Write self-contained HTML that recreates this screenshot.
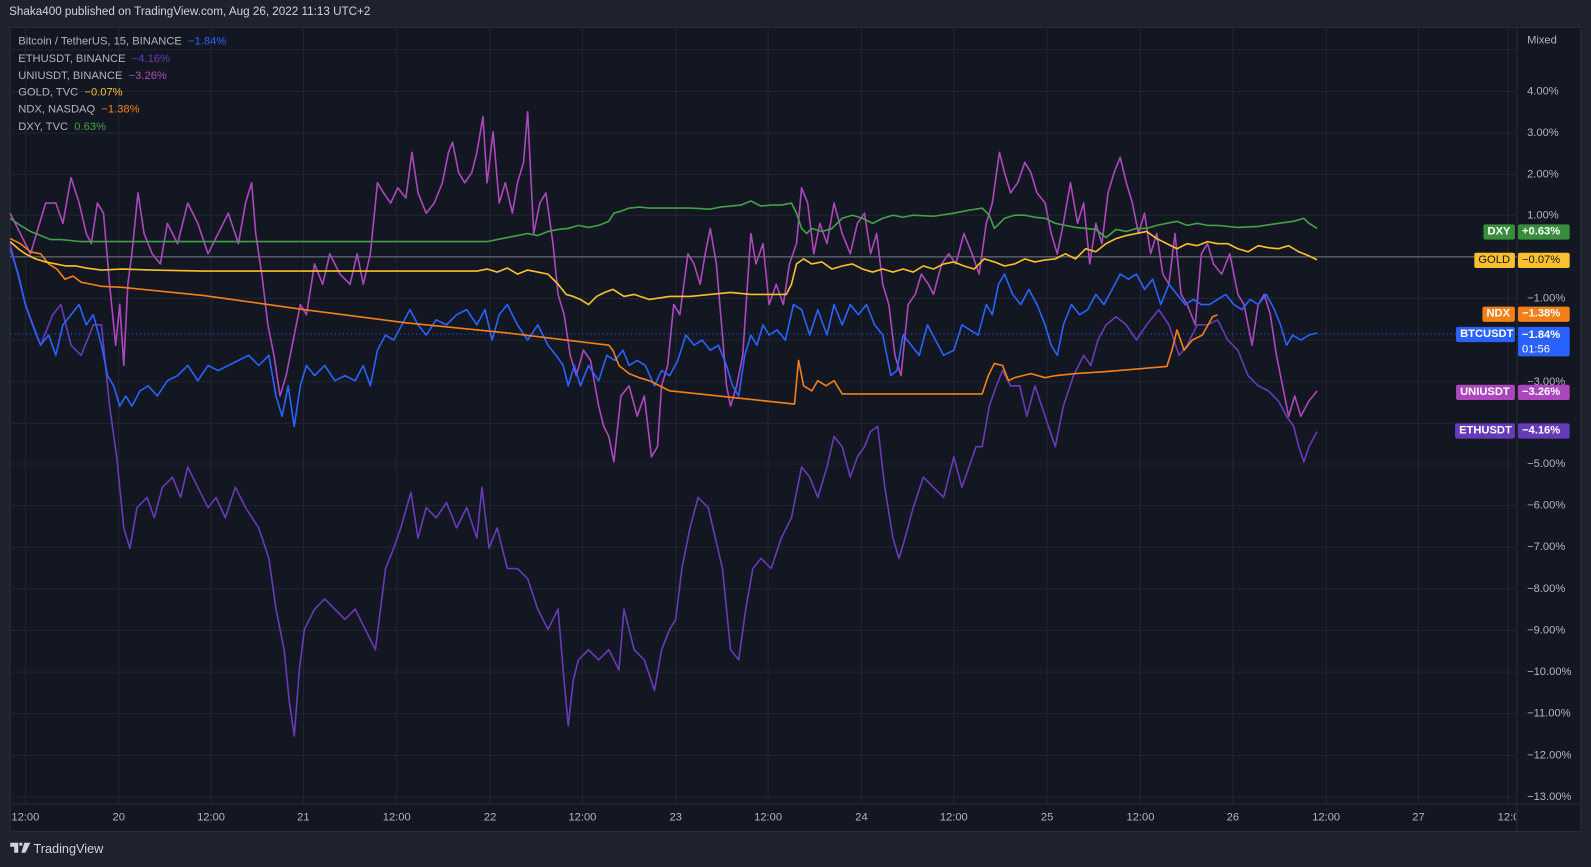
<!DOCTYPE html>
<html><head><meta charset="utf-8"><style>
html,body{margin:0;padding:0;background:#1e222d;overflow:hidden;width:1591px;height:867px}
#w{position:absolute;left:0;top:0;width:1568px;height:854px;transform:scale(1.01467,1.01522);transform-origin:0 0;font-family:"Liberation Sans",sans-serif}
.hd{position:absolute;left:9px;top:6px;font-size:11.5px;color:#d1d4dc}
.lg{position:absolute;left:18px;font-size:11px;color:#b2b5be;line-height:12px}
.ax{position:absolute;left:1505px;font-size:11px;color:#b2b5be}
.tx{position:absolute;top:799px;font-size:11px;color:#b2b5be;transform:translateX(-50%)}
.lb{position:absolute;height:15px;font-size:11px;font-weight:bold;color:#fff;line-height:15px;border-radius:2px;padding:0 4px;box-sizing:border-box}
</style></head><body><div id="w">
<div class="hd">Shaka400 published on TradingView.com, Aug 26, 2022 11:13 UTC+2</div>
<svg width="1568" height="854" style="position:absolute;left:0;top:0">
<rect x="10" y="27" width="1548" height="792" fill="#131722" stroke="#2a2e39"/>
<g stroke="#232632" stroke-width="1">
<line x1="25" y1="27" x2="25" y2="792"/><line x1="117" y1="27" x2="117" y2="792"/><line x1="208" y1="27" x2="208" y2="792"/><line x1="299" y1="27" x2="299" y2="792"/><line x1="391" y1="27" x2="391" y2="792"/><line x1="483" y1="27" x2="483" y2="792"/><line x1="574" y1="27" x2="574" y2="792"/><line x1="666" y1="27" x2="666" y2="792"/><line x1="757" y1="27" x2="757" y2="792"/><line x1="849" y1="27" x2="849" y2="792"/><line x1="940" y1="27" x2="940" y2="792"/><line x1="1032" y1="27" x2="1032" y2="792"/><line x1="1124" y1="27" x2="1124" y2="792"/><line x1="1215" y1="27" x2="1215" y2="792"/><line x1="1307" y1="27" x2="1307" y2="792"/><line x1="1398" y1="27" x2="1398" y2="792"/><line x1="1486" y1="27" x2="1486" y2="792"/>
<line x1="10" y1="49" x2="1495" y2="49"/><line x1="10" y1="90" x2="1495" y2="90"/><line x1="10" y1="131" x2="1495" y2="131"/><line x1="10" y1="172" x2="1495" y2="172"/><line x1="10" y1="212" x2="1495" y2="212"/><line x1="10" y1="294" x2="1495" y2="294"/><line x1="10" y1="335" x2="1495" y2="335"/><line x1="10" y1="376" x2="1495" y2="376"/><line x1="10" y1="417" x2="1495" y2="417"/><line x1="10" y1="457" x2="1495" y2="457"/><line x1="10" y1="498" x2="1495" y2="498"/><line x1="10" y1="539" x2="1495" y2="539"/><line x1="10" y1="580" x2="1495" y2="580"/><line x1="10" y1="621" x2="1495" y2="621"/><line x1="10" y1="662" x2="1495" y2="662"/><line x1="10" y1="703" x2="1495" y2="703"/><line x1="10" y1="744" x2="1495" y2="744"/><line x1="10" y1="785" x2="1495" y2="785"/>
</g>
<line x1="1495" y1="27" x2="1495" y2="819" stroke="#2a2e39"/>
<line x1="10" y1="792" x2="1558" y2="792" stroke="#2a2e39"/>
<line x1="10" y1="253" x2="1495" y2="253" stroke="#787b86"/>
<line x1="10" y1="329" x2="1495" y2="329" stroke="#2962ff" stroke-dasharray="1 3"/>
<g fill="none" stroke-width="1.6" stroke-linejoin="round">
<polyline stroke="#673ab7" points="10,240 25,300 40,340 52,310 60,300 70,340 80,350 92,320 100,320 108,400 115,450 122,520 128,540 135,500 145,490 152,510 160,480 170,470 178,490 185,460 195,480 205,500 213,490 222,510 232,480 242,500 255,520 265,550 272,600 280,640 285,690 290,725 295,660 300,620 310,600 320,590 330,600 340,610 350,600 360,620 370,640 380,560 388,540 395,520 405,485 412,530 420,500 430,510 440,495 450,520 460,500 470,530 475,480 482,540 490,520 500,560 510,560 520,570 530,600 540,620 550,600 555,660 560,715 565,670 570,650 580,640 590,650 600,640 610,660 615,600 625,640 635,650 645,680 652,640 660,620 666,610 672,560 680,520 688,490 698,500 705,530 712,560 720,640 728,650 735,600 742,560 750,550 760,560 770,530 780,510 790,460 798,470 806,490 815,460 822,430 830,440 838,470 845,450 852,440 858,425 865,420 872,480 880,530 886,550 892,530 900,500 910,470 920,480 930,490 940,450 948,480 955,460 962,440 968,440 975,400 982,380 988,365 996,380 1005,380 1012,410 1020,380 1030,410 1040,440 1048,400 1058,370 1068,350 1075,360 1082,335 1090,320 1100,312 1110,320 1120,335 1130,320 1142,305 1152,320 1162,350 1170,340 1180,320 1190,320 1200,315 1210,335 1220,345 1230,370 1240,380 1250,385 1260,395 1268,410 1275,420 1280,440 1285,455 1290,440 1298,425"/>
<polyline stroke="#ab47bc" points="10,210 20,230 30,250 45,200 55,200 62,220 70,175 78,200 85,230 90,240 96,200 102,210 108,280 114,340 118,300 122,360 126,280 130,250 136,190 142,230 150,250 158,260 165,220 175,240 185,200 195,220 205,250 215,230 225,210 235,240 242,200 248,180 252,230 258,270 264,320 270,350 276,390 282,370 290,330 296,300 302,310 310,260 318,280 325,250 335,270 345,280 352,250 358,280 365,250 372,180 378,190 385,200 392,185 400,195 406,150 412,190 420,210 428,200 436,180 442,150 446,140 452,170 458,180 465,170 470,150 476,115 480,180 486,130 492,200 498,180 505,210 510,180 516,160 520,110 526,230 532,200 538,190 545,240 550,290 556,310 562,350 568,370 575,345 582,355 590,400 595,420 600,430 605,455 612,390 620,380 628,410 635,390 642,450 648,440 652,380 658,360 664,300 670,310 678,250 684,260 690,280 695,250 700,225 706,260 712,330 716,380 720,400 726,380 732,350 740,230 745,260 752,240 758,300 765,280 772,300 778,260 785,240 790,185 796,200 802,250 808,220 815,240 822,200 830,230 838,250 845,220 852,210 858,250 864,230 870,280 876,300 882,350 888,370 895,300 902,290 908,270 915,280 920,290 928,260 935,250 942,260 950,230 958,250 965,270 972,220 978,200 985,150 990,170 996,190 1003,180 1010,160 1016,170 1022,190 1030,200 1036,230 1042,250 1048,220 1055,180 1062,220 1068,200 1074,260 1080,220 1086,240 1092,190 1098,170 1104,155 1110,180 1116,200 1122,230 1128,210 1134,250 1140,230 1146,270 1152,280 1158,230 1164,290 1170,300 1178,320 1184,250 1190,240 1196,260 1204,270 1212,250 1220,290 1226,300 1234,340 1240,300 1246,290 1252,310 1258,350 1264,380 1270,410 1276,390 1282,410 1290,395 1298,385"/>
<polyline stroke="#2962ff" points="10,245 18,270 25,300 32,320 40,340 48,330 55,350 62,320 70,310 78,300 85,320 92,310 100,340 106,370 112,380 118,400 124,390 130,400 138,385 146,380 155,390 165,375 175,370 185,360 195,375 205,360 215,365 225,360 235,355 245,350 255,360 265,350 272,390 278,410 284,380 290,420 296,380 302,360 310,370 320,360 330,375 340,370 350,375 358,360 365,380 372,345 380,330 388,335 396,320 404,305 412,320 420,330 430,315 440,320 450,310 460,305 470,320 478,305 485,335 492,310 500,300 510,320 520,335 530,320 540,340 548,350 555,360 560,380 566,360 572,380 580,360 590,375 598,350 606,355 614,345 620,360 628,355 636,360 645,380 652,365 660,370 668,355 676,330 684,340 692,335 700,345 708,340 716,360 722,380 728,390 734,350 740,330 746,340 752,320 758,330 766,325 774,335 782,300 790,305 798,330 806,305 815,330 822,300 830,320 838,300 846,310 854,300 862,320 870,330 878,370 884,365 890,330 898,340 906,350 914,320 922,335 930,350 940,345 948,320 956,325 964,330 972,300 978,310 984,280 990,270 998,290 1006,300 1014,285 1022,300 1030,320 1036,340 1042,350 1048,320 1056,300 1064,310 1072,305 1080,290 1088,300 1096,285 1104,270 1112,275 1120,270 1128,285 1136,275 1144,300 1152,280 1160,290 1168,300 1176,295 1184,300 1192,300 1200,295 1208,290 1216,300 1224,305 1232,295 1240,300 1248,290 1256,305 1262,320 1268,340 1274,330 1282,335 1290,330 1298,328"/>
<polyline stroke="#f57f17" points="10,235 20,240 30,248 40,250 48,260 56,265 64,275 72,272 80,278 90,280 100,282 120,283 200,291 300,305 400,318 500,328 600,340 604,345 610,360 620,368 630,372 640,375 650,380 660,385 783,398 787,355 792,380 800,385 806,375 814,380 822,375 830,388 840,388 968,388 974,370 980,358 988,360 994,375 1000,372 1008,370 1016,368 1030,372 1040,370 1060,368 1090,366 1150,361 1155,345 1160,325 1167,345 1175,335 1185,330 1195,312 1200,310"/>
<polyline stroke="#fbc02d" points="10,238 18,245 25,250 35,255 45,258 55,260 65,262 75,262 85,264 100,266 120,265 150,266 200,267 300,267 400,267 470,267 480,265 490,268 500,264 510,270 520,266 530,268 540,270 550,280 558,290 565,292 572,295 580,300 588,292 596,288 604,285 615,292 625,290 640,295 660,292 680,292 700,290 720,288 740,290 760,290 775,290 780,280 785,260 792,255 800,260 810,258 820,265 830,262 840,260 850,265 860,268 870,265 880,268 890,265 900,268 910,262 920,265 930,260 940,258 950,262 960,265 970,255 980,258 990,262 1000,260 1010,255 1020,258 1030,256 1040,255 1050,250 1060,255 1070,245 1080,248 1090,240 1100,235 1110,232 1120,230 1130,228 1140,235 1150,240 1160,245 1170,240 1180,242 1190,238 1200,240 1210,240 1220,245 1230,248 1240,242 1250,244 1260,245 1270,242 1280,248 1290,252 1298,256"/>
<polyline stroke="#43a047" points="10,215 20,222 30,228 40,232 50,236 60,236 80,238 100,238 200,238 300,238 400,238 480,238 490,236 500,234 510,232 520,230 530,232 540,228 550,226 560,225 570,222 580,224 590,222 600,218 605,210 612,208 620,205 630,204 640,205 660,205 680,205 700,206 710,204 720,203 730,202 740,198 750,203 760,202 770,202 780,200 785,210 790,225 795,230 800,225 810,228 820,225 830,215 840,212 850,215 860,220 870,215 880,212 890,214 900,212 920,213 940,210 955,207 968,205 975,212 980,225 990,215 1000,212 1010,212 1020,214 1030,215 1040,220 1050,222 1060,224 1070,225 1080,226 1090,234 1100,226 1110,228 1120,225 1130,225 1140,222 1150,220 1160,218 1170,222 1180,220 1190,222 1200,222 1220,224 1240,223 1260,220 1275,218 1285,215 1290,220 1298,225"/>
</g>
</svg>
<div class="lg" style="top:35px">Bitcoin / TetherUS, 15, BINANCE &nbsp;<span style="color:#2962ff">−1.84%</span></div>
<div class="lg" style="top:52px">ETHUSDT, BINANCE &nbsp;<span style="color:#673ab7">−4.16%</span></div>
<div class="lg" style="top:69px">UNIUSDT, BINANCE &nbsp;<span style="color:#ab47bc">−3.26%</span></div>
<div class="lg" style="top:85px">GOLD, TVC &nbsp;<span style="color:#fbc02d">−0.07%</span></div>
<div class="lg" style="top:102px">NDX, NASDAQ &nbsp;<span style="color:#f57f17">−1.38%</span></div>
<div class="lg" style="top:119px">DXY, TVC &nbsp;<span style="color:#43a047">0.63%</span></div>
<div class="ax" style="top:34px">Mixed</div>
<div class="ax" style="top:84px">4.00%</div><div class="ax" style="top:125px">3.00%</div><div class="ax" style="top:166px">2.00%</div><div class="ax" style="top:206px">1.00%</div><div class="ax" style="top:288px">−1.00%</div><div class="ax" style="top:370px">−3.00%</div><div class="ax" style="top:451px">−5.00%</div><div class="ax" style="top:492px">−6.00%</div><div class="ax" style="top:533px">−7.00%</div><div class="ax" style="top:574px">−8.00%</div><div class="ax" style="top:615px">−9.00%</div><div class="ax" style="top:656px">−10.00%</div><div class="ax" style="top:697px">−11.00%</div><div class="ax" style="top:738px">−12.00%</div><div class="ax" style="top:779px">−13.00%</div>
<div class="lb" style="left:1462px;top:221px;width:31px;background:#388e3c">DXY</div><div class="lb" style="left:1496px;top:221px;width:51px;background:#388e3c">+0.63%</div>
<div class="lb" style="left:1453px;top:249px;width:40px;background:#fbc02d;color:#131722;font-weight:normal">GOLD</div><div class="lb" style="left:1496px;top:249px;width:51px;background:#fbc02d;color:#131722;font-weight:normal">−0.07%</div>
<div class="lb" style="left:1461px;top:302px;width:32px;background:#f57f17">NDX</div><div class="lb" style="left:1496px;top:302px;width:51px;background:#f57f17">−1.38%</div>
<div class="lb" style="left:1435px;top:322px;width:58px;background:#2962ff">BTCUSDT</div><div class="lb" style="left:1496px;top:322px;width:51px;height:29px;background:#2962ff;line-height:14px;padding-top:1px">−1.84%<br><span style="font-weight:normal">01:56</span></div>
<div class="lb" style="left:1435px;top:379px;width:58px;background:#ab47bc">UNIUSDT</div><div class="lb" style="left:1496px;top:379px;width:51px;background:#ab47bc">−3.26%</div>
<div class="lb" style="left:1434px;top:417px;width:59px;background:#673ab7">ETHUSDT</div><div class="lb" style="left:1496px;top:417px;width:51px;background:#673ab7">−4.16%</div>
<div class="tx" style="left:25px">12:00</div><div class="tx" style="left:117px">20</div><div class="tx" style="left:208px">12:00</div><div class="tx" style="left:299px">21</div><div class="tx" style="left:391px">12:00</div><div class="tx" style="left:483px">22</div><div class="tx" style="left:574px">12:00</div><div class="tx" style="left:666px">23</div><div class="tx" style="left:757px">12:00</div><div class="tx" style="left:849px">24</div><div class="tx" style="left:940px">12:00</div><div class="tx" style="left:1032px">25</div><div class="tx" style="left:1124px">12:00</div><div class="tx" style="left:1215px">26</div><div class="tx" style="left:1307px">12:00</div><div class="tx" style="left:1398px">27</div>
<div style="position:absolute;left:1476px;top:799px;width:18px;overflow:hidden;font-size:11px;color:#b2b5be">12:00</div>
<svg width="22" height="12" style="position:absolute;left:10px;top:830px"><path d="M0 0H8V10H4V4H0Z M9 0H12V3H9Z M14 0H20L15 10H11Z" fill="#d1d4dc"/></svg>
<div style="position:absolute;left:33px;top:829px;font-size:12.5px;color:#d1d4dc">TradingView</div>
</div></body></html>
